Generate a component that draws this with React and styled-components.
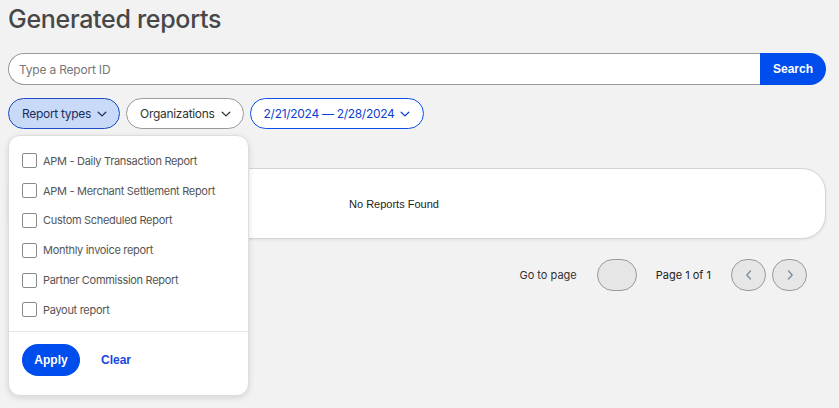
import React from "react";
import styled, { createGlobalStyle } from "styled-components";

const GlobalStyle = createGlobalStyle`
  body {
    margin: 0;
    background: #f2f2f2;
    font-family: Inter, "Liberation Sans", sans-serif;
  }
`;

const Page = styled.div`
  min-height: 100vh;
  box-sizing: border-box;
  padding: 0 13px 0 8px;
`;

const Title = styled.h1`
  margin: 0;
  padding-top: 3px;
  font-size: 25px;
  line-height: 32px;
  font-weight: 500;
  color: #474747;
  letter-spacing: -0.3px;
`;

const SearchRow = styled.div`
  display: flex;
  margin-top: 18px;
  height: 32px;
`;

const SearchInput = styled.input`
  flex: 1;
  height: 32px;
  box-sizing: border-box;
  border: 1px solid #9a9a9a;
  border-right: none;
  border-radius: 16px 0 0 16px;
  padding: 0 10px;
  font-family: Inter, "Liberation Sans", sans-serif;
  font-size: 12px;
  letter-spacing: -0.2px;
  color: #333;
  background: #fff;
  outline: none;
  &::placeholder { color: #777; }
`;

const SearchBtn = styled.button`
  width: 66px;
  height: 32px;
  border: none;
  border-radius: 0 16px 16px 0;
  background: #004ded;
  color: #fff;
  font-family: "Liberation Sans", Arial, sans-serif;
  font-weight: 700;
  font-size: 12px;
  cursor: pointer;
`;

const Filters = styled.div`
  position: relative;
  display: flex;
  gap: 6px;
  margin-top: 13px;
`;

const Pill = styled.button`
  display: flex;
  align-items: center;
  gap: 6px;
  height: 31px;
  box-sizing: border-box;
  padding: 0 ${p => (p.$blue ? 13 : 12)}px 0 13px;
  border-radius: 16px;
  font-family: Inter, "Liberation Sans", sans-serif;
  font-size: 12px;
  letter-spacing: -0.3px;
  cursor: pointer;
  background: ${p => (p.$active ? "#c8daf8" : "#fff")};
  border: 1px solid ${p => (p.$active ? "#1f4bc4" : p.$blue ? "#0a4fe6" : "#9a9a9a")};
  color: ${p => (p.$active ? "#1b2d5e" : p.$blue ? "#0d3fd0" : "#333")};
`;

const Dropdown = styled.div`
  position: absolute;
  top: 37px;
  left: 0;
  width: 241px;
  box-sizing: border-box;
  background: #fff;
  border-radius: 12px;
  border: 1px solid #ddd;
  box-shadow: 0 2px 6px rgba(0, 0, 0, 0.12);
  z-index: 5;
`;

const Options = styled.div`
  padding: 10px 13px 6px;
`;

const Option = styled.label`
  display: flex;
  align-items: center;
  gap: 6px;
  height: 29.8px;
  font-size: 11px;
  letter-spacing: -0.3px;
  color: #555;
  cursor: pointer;
`;

const Box = styled.span`
  width: 15px;
  height: 15px;
  box-sizing: border-box;
  border: 1px solid #8a8a8a;
  border-radius: 2px;
  background: #fff;
`;

const Footer = styled.div`
  display: flex;
  align-items: center;
  gap: 21px;
  border-top: 1px solid #e6e6e6;
  padding: 12px 13px 19px;
`;

const ApplyBtn = styled.button`
  width: 58px;
  height: 32px;
  border: none;
  border-radius: 16px;
  background: #004ded;
  color: #fff;
  font-family: "Liberation Sans", Arial, sans-serif;
  font-weight: 700;
  font-size: 12px;
  cursor: pointer;
`;

const ClearBtn = styled.button`
  border: none;
  background: none;
  padding: 0;
  color: #1746e0;
  font-family: "Liberation Sans", Arial, sans-serif;
  font-weight: 700;
  font-size: 12px;
  cursor: pointer;
`;

const Card = styled.div`
  margin-top: 39px;
  height: 71px;
  box-sizing: border-box;
  padding-right: 46px;
  display: flex;
  align-items: center;
  justify-content: center;
  background: #fff;
  border-radius: 24px;
  border: 1px solid #d4d4d4;
  box-shadow: 0 1px 3px rgba(0, 0, 0, 0.08);
  font-family: "Liberation Sans", Arial, sans-serif;
  font-size: 11px;
  color: #222;
`;

const Pager = styled.div`
  display: flex;
  align-items: center;
  justify-content: flex-end;
  margin-top: 20px;
  padding-right: 19px;
  font-size: 11px;
  color: #333;
`;

const PageInput = styled.input`
  width: 40px;
  height: 32px;
  box-sizing: border-box;
  margin: 0 19px 0 20px;
  border: 1px solid #9a9a9a;
  border-radius: 16px;
  background: #e6e6e6;
  outline: none;
`;

const PageLabel = styled.span`
  margin-right: 20px;
  color: #222;
`;

const Circle = styled.button`
  width: 35px;
  height: 32px;
  margin-left: ${p => p.$ml || 0}px;
  border-radius: 16px;
  border: 1px solid #9a9a9a;
  background: #e6e6e6;
  display: flex;
  align-items: center;
  justify-content: center;
  padding: 0;
`;

const Chevron = ({ color = "currentColor", size = 10 }) => (
  <svg width={size} height={size} viewBox="0 0 10 10" fill="none">
    <path d="M1.2 3.2 5 6.9 8.8 3.2" stroke={color} strokeWidth="1.3" strokeLinecap="round" strokeLinejoin="round" />
  </svg>
);

const Arrow = ({ dir }) => (
  <svg width="10" height="12" viewBox="0 0 10 12" fill="none">
    <path
      d={dir === "left" ? "M6.5 2 2.8 6 6.5 10" : "M3.5 2 7.2 6 3.5 10"}
      stroke="#7f8aa0"
      strokeWidth="1.3"
      strokeLinecap="round"
      strokeLinejoin="round"
    />
  </svg>
);

const reportTypes = [
  "APM - Daily Transaction Report",
  "APM - Merchant Settlement Report",
  "Custom Scheduled Report",
  "Monthly invoice report",
  "Partner Commission Report",
  "Payout report",
];

export default function App() {
  return (
    <>
      <GlobalStyle />
      <Page>
        <Title>Generated reports</Title>
        <SearchRow>
          <SearchInput placeholder="Type a Report ID" />
          <SearchBtn>Search</SearchBtn>
        </SearchRow>
        <Filters>
          <Pill $active>
            Report types <Chevron />
          </Pill>
          <Pill>
            Organizations <Chevron />
          </Pill>
          <Pill $blue>
            2/21/2024 — 2/28/2024 <Chevron />
          </Pill>
          <Dropdown>
            <Options>
              {reportTypes.map(t => (
                <Option key={t}>
                  <Box />
                  {t}
                </Option>
              ))}
            </Options>
            <Footer>
              <ApplyBtn>Apply</ApplyBtn>
              <ClearBtn>Clear</ClearBtn>
            </Footer>
          </Dropdown>
        </Filters>
        <Card>No Reports Found</Card>
        <Pager>
          Go to page
          <PageInput />
          <PageLabel>Page 1 of 1</PageLabel>
          <Circle>
            <Arrow dir="left" />
          </Circle>
          <Circle $ml={6}>
            <Arrow dir="right" />
          </Circle>
        </Pager>
      </Page>
    </>
  );
}
